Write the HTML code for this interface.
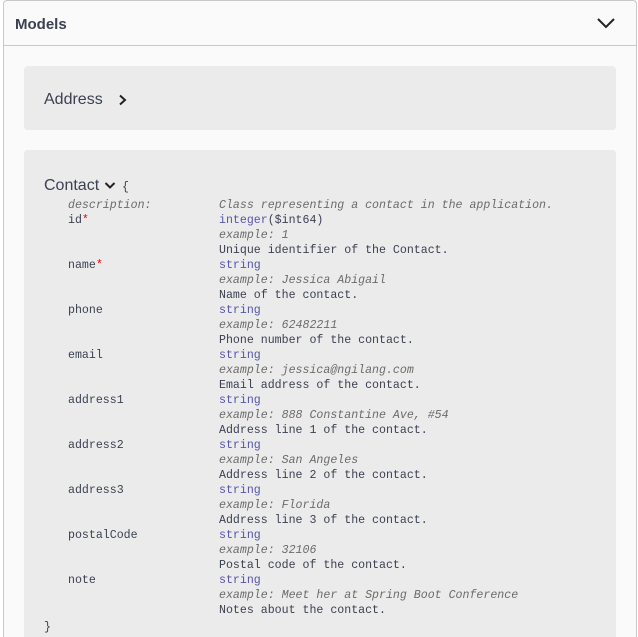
<!DOCTYPE html>
<html style="height:637px;overflow:hidden"><head><style>
body{margin:0;width:638px;height:637px;overflow:hidden;background:#fff;font-family:"Liberation Sans",sans-serif;position:relative;}
.outer{position:absolute;left:3px;top:0;width:632px;height:636px;border:1px solid #c8c8c8;border-bottom:none;border-radius:4px 4px 0 0;background:#fafafa;}
.hdr{position:absolute;left:0;top:0;width:632px;height:44px;border-bottom:1px solid #c8c8c8;}
.hdr span{position:absolute;left:11px;top:15px;font-size:15px;font-weight:bold;color:#3b4151;}
.box{position:absolute;left:24px;width:592px;background:#ebebeb;border-radius:4px;}
.t{position:absolute;font-size:16px;color:#3b4151;}
.m{position:absolute;font-family:"Liberation Mono",monospace;font-size:11.6px;line-height:15px;color:#3b4151;white-space:pre;}
.i{font-style:italic;color:#6b6b6b;}
.p{color:#55a;}
.r{color:#f00;}
</style></head><body>
<div class="outer"><div class="hdr"><span>Models</span>
<svg style="position:absolute;left:592px;top:16px" width="20" height="12" viewBox="0 0 20 12"><path d="M2 2 L10 10 L18 2" fill="none" stroke="#222" stroke-width="2"/></svg></div></div>
<div class="box" style="top:66px;height:64px"></div>
<div class="t" style="left:44px;top:91px">Address</div>
<svg style="position:absolute;left:118px;top:94px" width="10" height="12" viewBox="0 0 10 12"><path d="M2 1.5 L7 6 L2 10.5" fill="none" stroke="#222" stroke-width="2"/></svg>
<div class="box" style="top:150px;height:487px;border-radius:4px 4px 0 0"></div>
<div class="t" style="left:44px;top:177px">Contact</div>
<svg style="position:absolute;left:104px;top:181px" width="12" height="9" viewBox="0 0 12 9"><path d="M1.5 2 L6 6.5 L10.5 2" fill="none" stroke="#222" stroke-width="2"/></svg>
<div class="m" style="left:122px;top:180px">{</div>
<div class="m" style="left:68px;top:198px"><span class="i">description:</span>
id<span class="r">*</span>


name<span class="r">*</span>


phone


email


address1


address2


address3


postalCode


note</div>
<div class="m" style="left:219px;top:198px"><span class="i">Class representing a contact in the application.</span>
<span class="p">integer</span>($int64)
<span class="i">example: 1</span>
Unique identifier of the Contact.
<span class="p">string</span>
<span class="i">example: Jessica Abigail</span>
Name of the contact.
<span class="p">string</span>
<span class="i">example: 62482211</span>
Phone number of the contact.
<span class="p">string</span>
<span class="i">example: jessica@ngilang.com</span>
Email address of the contact.
<span class="p">string</span>
<span class="i">example: 888 Constantine Ave, #54</span>
Address line 1 of the contact.
<span class="p">string</span>
<span class="i">example: San Angeles</span>
Address line 2 of the contact.
<span class="p">string</span>
<span class="i">example: Florida</span>
Address line 3 of the contact.
<span class="p">string</span>
<span class="i">example: 32106</span>
Postal code of the contact.
<span class="p">string</span>
<span class="i">example: Meet her at Spring Boot Conference</span>
Notes about the contact.</div>
<div class="m" style="left:44px;top:621px;line-height:14px">}</div>
</body></html>
